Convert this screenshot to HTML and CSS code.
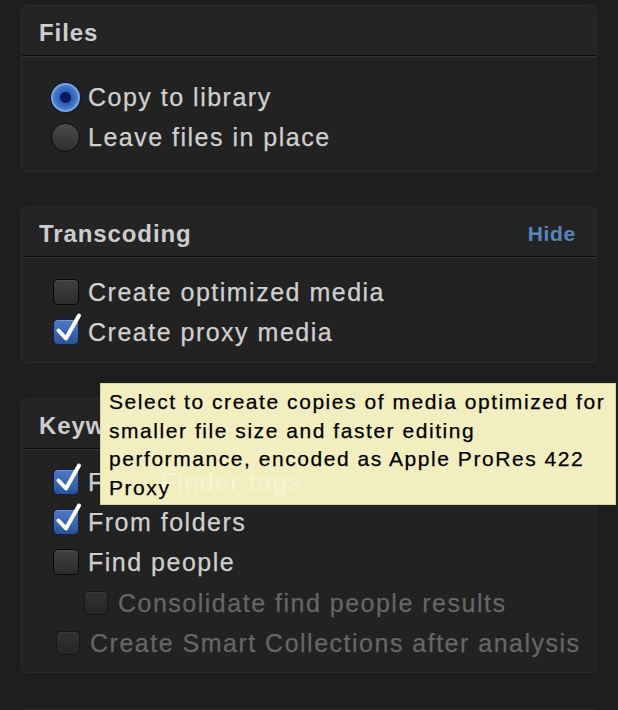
FILE: index.html
```html
<!DOCTYPE html>
<html>
<head>
<meta charset="utf-8">
<link rel="stylesheet" href="styles.css">
</head>
<body>
<div class="page">
  <section class="panel p-files">
    <header class="panel-head"><h2>Files</h2></header>
    <div class="panel-body">
      <div class="row"><span class="ctl"><span class="radio on"></span></span><span class="label">Copy to library</span></div>
      <div class="row"><span class="ctl"><span class="radio"></span></span><span class="label">Leave files in place</span></div>
    </div>
  </section>

  <section class="panel p-trans">
    <header class="panel-head"><h2>Transcoding</h2><span class="hide">Hide</span></header>
    <div class="panel-body">
      <div class="row"><span class="ctl"><span class="check"></span></span><span class="label">Create optimized media</span></div>
      <div class="row"><span class="ctl"><span class="check on"><svg viewBox="0 0 26 26" class="tick"><path d="M4.5 10.5 L12 18.5 L25 -4.5"/></svg></span></span><span class="label">Create proxy media</span></div>
    </div>
  </section>

  <section class="panel p-keys">
    <header class="panel-head"><h2>Keywords</h2></header>
    <div class="panel-body">
      <div class="row"><span class="ctl"><span class="check on"><svg viewBox="0 0 26 26" class="tick"><path d="M4.5 10.5 L12 18.5 L25 -4.5"/></svg></span></span><span class="label">From <span class="ghost">Finder tags</span></span></div>
      <div class="row"><span class="ctl"><span class="check on"><svg viewBox="0 0 26 26" class="tick"><path d="M4.5 10.5 L12 18.5 L25 -4.5"/></svg></span></span><span class="label">From folders</span></div>
      <div class="row"><span class="ctl"><span class="check"></span></span><span class="label">Find people</span></div>
      <div class="row sub disabled"><span class="check"></span><span class="label">Consolidate find people results</span></div>
      <div class="row sub2 disabled"><span class="check"></span><span class="label">Create Smart Collections after analysis</span></div>
    </div>
  </section>

  <section class="panel p-next">
    <header class="panel-head"></header>
  </section>

  <div class="tooltip">Select to create copies of media optimized for<br>smaller file size and faster editing<br>performance, encoded as Apple ProRes 422<br>Proxy</div>
</div>
</body>
</html>
```

FILE: styles.css
```css
html, body {
  margin: 0;
  padding: 0;
  background: #1e1e1e;
  overflow: hidden;
}
.page {
  position: relative;
  width: 618px;
  height: 710px;
  box-sizing: border-box;
  padding: 5px 0 0 21px;
  display: flex;
  flex-direction: column;
  gap: 34px;
  font-family: "Liberation Sans", Arial, sans-serif;
}
.panel {
  width: 576px;
  box-sizing: border-box;
  background: #222222;
  border: 1px solid #2a2a2a;
  border-radius: 5px;
  flex: none;
}
.p-keys { margin-top: 1px; }
.p-next { margin-top: 1px; height: 80px; }
.panel-head {
  height: 50px;
  box-sizing: border-box;
  display: flex;
  align-items: center;
  justify-content: space-between;
  padding: 4px 20px 0 17px;
  background: #242424;
  border-bottom: 1px solid #0b0b0b;
  border-radius: 5px 5px 0 0;
}
.panel-head h2 {
  margin: 0;
  font-size: 24px;
  font-weight: bold;
  letter-spacing: 0.9px;
  color: #cdcdcd;
}
.hide {
  font-size: 21px;
  font-weight: bold;
  letter-spacing: 0.7px;
  color: #5a84c0;
}
.panel-body {
  border-top: 1px solid #333333;
  padding: 0 0 10px 29px;
}
.p-files .panel-body { padding-top: 20px; padding-bottom: 14px; }
.p-trans .panel-body { padding-top: 14px; }
.p-keys .panel-body { padding-top: 12px; }
.row {
  height: 40px;
  display: flex;
  align-items: center;
  gap: 8px;
}
.ctl {
  width: 29px;
  height: 29px;
  display: flex;
  align-items: center;
  justify-content: center;
  flex: none;
}
.label {
  font-size: 25px;
  letter-spacing: 1.5px;
  color: #d0d0d0;
  white-space: nowrap;
  -webkit-text-stroke: 0.25px currentColor;
}
.radio {
  width: 29px;
  height: 29px;
  box-sizing: border-box;
  border-radius: 50%;
  border: 1px solid #0c0c0c;
  background: linear-gradient(#4a4a4a, #2f2f2f);
  box-shadow: inset 0 1px 0 rgba(255,255,255,0.08);
  position: relative;
}
.radio.on {
  border: 2px solid #79a3e0;
  background: radial-gradient(circle at 50% 50%, #0b1a5a 0, #0b1a5a 5px, #2c5fb4 6px, #4f82d2 13px);
  box-shadow: 0 0 0 1px #0d1a38;
}
.check {
  width: 26px;
  height: 26px;
  box-sizing: border-box;
  border-radius: 5px;
  border: 1px solid #080808;
  background: linear-gradient(#414141, #2b2b2b);
  box-shadow: inset 0 1px 0 rgba(255,255,255,0.07);
  position: relative;
  flex: none;
}
.check.on {
  border: 1px solid #0f1f45;
  background: linear-gradient(#4d7bc4, #2a5499);
  box-shadow: inset 0 1px 0 rgba(255,255,255,0.2);
}
.tick {
  position: absolute;
  left: 0;
  top: 0;
  width: 26px;
  height: 26px;
  overflow: visible;
}
.tick path {
  fill: none;
  stroke: #ffffff;
  stroke-width: 4;
  stroke-linecap: round;
  stroke-linejoin: round;
}
.row.sub { padding-left: 33px; gap: 10px; height: 42px; }
.row.sub2 { padding-left: 5px; gap: 10px; height: 38px; }
.disabled .check {
  width: 24px;
  height: 24px;
  border-color: #151515;
  background: linear-gradient(#323232, #262626);
  box-shadow: inset 0 1px 0 rgba(255,255,255,0.04);
}
.disabled .label {
  color: #666666;
  -webkit-text-stroke: 0.25px #666666;
}
.ghost {
  position: relative;
  z-index: 3;
  color: rgba(255, 255, 245, 0.4);
  -webkit-text-stroke: 0;
}
.tooltip {
  position: absolute;
  left: 100px;
  top: 383px;
  width: 516px;
  height: 122px;
  box-sizing: border-box;
  padding: 4px 8px;
  background: #f2eebf;
  border: 1px solid #d9d5a8;
  color: #000;
  font-size: 21px;
  line-height: 28.5px;
  letter-spacing: 1.55px;
  white-space: nowrap;
  z-index: 2;
  -webkit-text-stroke: 0.25px #000;
}
```
